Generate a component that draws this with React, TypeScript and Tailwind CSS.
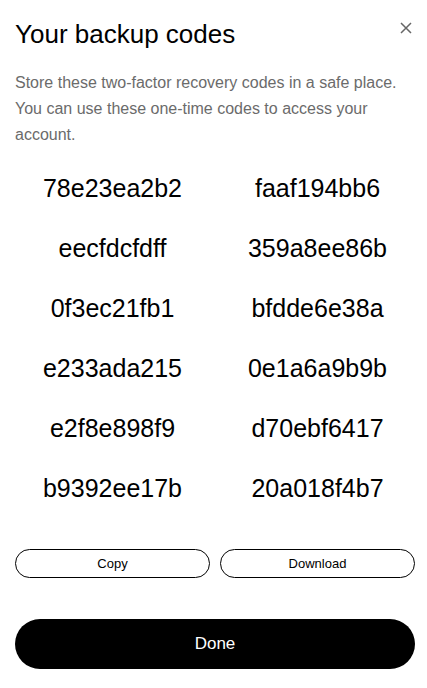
import React from "react";

const codes = [
  ["78e23ea2b2", "faaf194bb6"],
  ["eecfdcfdff", "359a8ee86b"],
  ["0f3ec21fb1", "bfdde6e38a"],
  ["e233ada215", "0e1a6a9b9b"],
  ["e2f8e898f9", "d70ebf6417"],
  ["b9392ee17b", "20a018f4b7"],
];

export default function App() {
  return (
    <div
      className="w-[427px] h-[688px] bg-white text-black pl-[15px] pr-[12px]"
      style={{ fontFamily: "'Liberation Sans', Arial, sans-serif" }}
    >
      <div className="flex items-start justify-between pt-[18px]">
        <h1 className="text-[26px] leading-[32px] font-normal">Your backup codes</h1>
        <button className="mt-[3px] mr-[2px] text-[#666]" aria-label="Close">
          <svg width="14" height="14" viewBox="0 0 14 14" fill="none" stroke="currentColor" strokeWidth="1.5">
            <path d="M2 2 L12 12 M12 2 L2 12" />
          </svg>
        </button>
      </div>
      <p className="mt-[20px] text-[16px] leading-[26px] text-[#6b6b6b]">
        Store these two-factor recovery codes in a safe place. You can use these one-time codes to access your account.
      </p>
      <div className="grid grid-cols-2 gap-x-[10px] mt-[11px]">
        {codes.map(([a, b]) => (
          <React.Fragment key={a}>
            <div className="h-[60px] flex items-center justify-center text-[25px]">{a}</div>
            <div className="h-[60px] flex items-center justify-center text-[25px]">{b}</div>
          </React.Fragment>
        ))}
      </div>
      <div className="grid grid-cols-2 gap-x-[10px] mt-[30px]">
        <button className="h-[29px] rounded-full border border-black text-[13px]">Copy</button>
        <button className="h-[29px] rounded-full border border-black text-[13px]">Download</button>
      </div>
      <button className="mt-[41px] w-full h-[50px] rounded-full bg-black text-white text-[17px]">Done</button>
    </div>
  );
}
